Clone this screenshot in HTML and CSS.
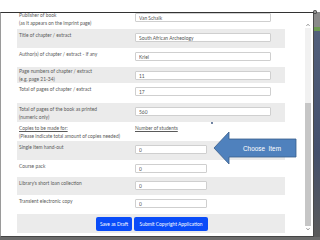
FILE: index.html
```
<!DOCTYPE html>
<html>
<head>
<meta charset="utf-8">
<link rel="stylesheet" href="styles.css">
</head>
<body>
<div class="screen">
  <div class="top"></div>
  <div class="frame">
    <div class="dialog">
      <div class="content">
        <div class="form">
          <div class="row first">
            <div class="label">Publisher of book<br>(as it appears on the imprint page)</div>
            <div class="field"><input class="input" type="text" value="Van Schalk"></div>
          </div>
          <div class="row alt">
            <div class="label">Title of chapter / extract</div>
            <div class="field"><input class="input" type="text" value="South African Archeology"></div>
          </div>
          <div class="row">
            <div class="label">Author(s) of chapter / extract - if any</div>
            <div class="field"><input class="input" type="text" value="Kriel"></div>
          </div>
          <div class="row alt h16">
            <div class="label tight">Page numbers of chapter / extract<br>(e.g. page 21-34)</div>
            <div class="field"><input class="input" type="text" value="11"></div>
          </div>
          <div class="row h20">
            <div class="label">Total of pages of chapter / extract</div>
            <div class="field"><input class="input" type="text" value="17"></div>
          </div>
          <div class="row alt">
            <div class="label">Total of pages of the book as printed<br>(numeric only)</div>
            <div class="field"><input class="input" type="text" value="560"></div>
          </div>
          <div class="row">
            <div class="label"><span class="u">Copies to be made for:</span><br>(Please indicate total amount of copies needed)</div>
            <div class="field"><span class="label u">Number of students</span></div>
          </div>
          <div class="row alt">
            <div class="label">Single item hand-out</div>
            <div class="field"><input class="input short" type="text" value="0"></div>
          </div>
          <div class="row h17">
            <div class="label">Course pack</div>
            <div class="field"><input class="input short" type="text" value="0"></div>
          </div>
          <div class="row alt h18">
            <div class="label">Library's short loan collection</div>
            <div class="field"><input class="input short" type="text" value="0"></div>
          </div>
          <div class="row">
            <div class="label">Transient electronic copy</div>
            <div class="field"><input class="input short" type="text" value="0"></div>
          </div>
          <div class="row alt actions">
            <button class="btn draft">Save as Draft</button>
            <button class="btn submit">Submit Copyright Application</button>
          </div>
        </div>
      </div>
      <div class="scrollbar">
        <svg class="chev" viewBox="0 0 6 6"><path d="M1.5 3.8 L3 2.3 L4.5 3.8" fill="none" stroke="#666" stroke-width="0.8"/></svg>
        <div class="track"><div class="thumb"></div></div>
        <svg class="chev" viewBox="0 0 6 6"><path d="M1.5 2.3 L3 3.8 L4.5 2.3" fill="none" stroke="#666" stroke-width="0.8"/></svg>
      </div>
    </div>
    <div class="side"></div>
  </div>
  <svg class="overlay" viewBox="0 0 320 240" width="320" height="240">
    <polygon points="214,148 229,132 229,139 296,139 296,157 229,157 229,164" fill="#4f81bd" stroke="#385d8a" stroke-width="0.8"/>
    <text x="262" y="150.5" class="callout-text" text-anchor="middle" xml:space="preserve">Choose  Item</text>
    <circle cx="212" cy="123" r="0.9" fill="#2d4a78"/>
    <circle cx="315" cy="12" r="2" fill="#444"/>
    <circle cx="315" cy="12" r="0.9" fill="#bbb"/>
  </svg>
</div>
</body>
</html>
```

FILE: styles.css
```
* { box-sizing: border-box; }
html, body { margin: 0; padding: 0; }
body { background: #fff; }

.screen {
  position: relative;
  width: 320px;
  height: 240px;
  overflow: hidden;
  background: #fff;
  font-family: Lato, "Open Sans", sans-serif;
}

.top { height: 12px; }

.frame {
  display: flex;
  height: 228px;
  background: #6a6a6a;
}

.dialog {
  display: flex;
  width: 314px;
  height: 225px;
  background: #fff;
  border-top: 1px solid #333;
  border-left: 1px solid #9a9a9a;
  border-right: 1px solid #4a4a4a;
  border-bottom: 1px solid #444;
}

.content {
  width: 303px;
  overflow: hidden;
  padding-left: 16px;
}

.form {
  width: 268px;
  margin-top: -4px;
}

.row {
  display: grid;
  grid-template-columns: 118px 1fr;
  height: 19px;
  background: #fff;
}
.row.first { height: 20px; }
.row.alt { background: #ebebeb; }
.row.h16 { height: 16px; }
.row.h17 { height: 17px; }
.row.h18 { height: 18px; }
.row.h20 { height: 20px; }

.label {
  padding-left: 2px;
  padding-top: 2px;
  font-size: 4.9px;
  line-height: 8px;
  color: #5a5a5a;
  white-space: nowrap;
}
.label.tight { padding-top: 0; }
.field .label { padding-left: 0; display: block; }
.u { text-decoration: underline; }

.input {
  display: block;
  margin-top: 4px;
  width: 136px;
  height: 9px;
  padding: 0 3px;
  border: 1px solid #cfcfcf;
  border-radius: 1px;
  background: #fff;
  font-family: Lato, "Open Sans", sans-serif;
  font-size: 4.9px;
  color: #555;
  outline: none;
}
.input.short { width: 72px; }

.row.actions {
  display: flex;
  justify-content: center;
  align-items: center;
  gap: 2px;
  padding-left: 2px;
}

.btn {
  height: 14px;
  padding: 0;
  border: none;
  border-radius: 2px;
  background: #0a4cf8;
  color: #fff;
  font-family: Lato, "Open Sans", sans-serif;
  font-size: 4.9px;
}
.btn.draft { width: 36px; }
.btn.submit { width: 74px; }

.scrollbar {
  display: flex;
  flex-direction: column;
  width: 6px;
  margin-left: 1px;
  padding-top: 9px;
  padding-bottom: 4px;
}
.chev { display: block; width: 6px; height: 6px; }
.track {
  flex: 1;
  display: flex;
  flex-direction: column;
  background: #f1f1f1;
  padding-top: 75px;
}
.thumb {
  flex: 1;
  background: #c6c6c6;
}

.side {
  flex: 1;
  height: 225px;
  background: linear-gradient(#8a8a8a 0, #8a8a8a 15px, #6c9a52 15px, #6c9a52 19px, #53607c 19px, #44506c 140px, #5a5a5a 225px);
}

.overlay {
  position: absolute;
  left: 0;
  top: 0;
  pointer-events: none;
}
.callout-text {
  font-family: "Liberation Sans", sans-serif;
  font-size: 6.4px;
  fill: #fff;
}
```
